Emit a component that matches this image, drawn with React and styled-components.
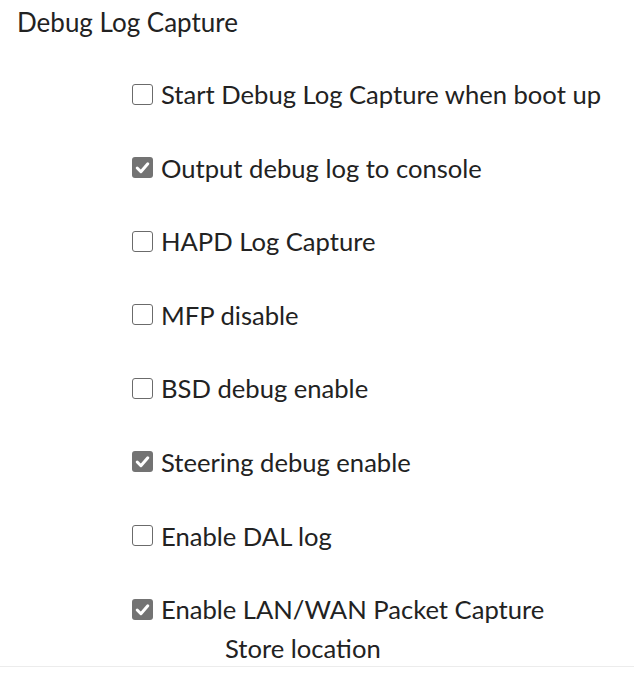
import React from "react";
import styled, { createGlobalStyle } from "styled-components";

const Global = createGlobalStyle`
  html, body { margin: 0; padding: 0; background: #fff; }
  body { font-family: Lato, "Open Sans", sans-serif; color: #222; }
`;

const Page = styled.div`
  width: 634px;
  height: 682px;
  overflow: hidden;
`;

const Section = styled.section`
  border-bottom: 1px solid #ececec;
  height: 667px;
  box-sizing: border-box;
`;

const Title = styled.h2`
  margin: 0;
  padding: 7px 0 0 17px;
  font-size: 26px;
  font-weight: 400;
  line-height: 30px;
  color: #222;
`;

const List = styled.div`
  display: flex;
  flex-direction: column;
  gap: 43.6px;
  padding: 42px 0 0 132px;
`;

const Row = styled.label`
  display: flex;
  align-items: center;
  gap: 8px;
  height: 30px;
  font-size: 25.6px;
  line-height: 30px;
  color: #222;
`;

const Box = styled.span`
  width: 21px;
  height: 21px;
  box-sizing: border-box;
  border-radius: 3px;
  flex: none;
  display: flex;
  align-items: center;
  justify-content: center;
  border: ${(p) => (p.$checked ? "none" : "1.6px solid #6b6b6b")};
  background: ${(p) => (p.$checked ? "#737373" : "#fff")};
`;

const Sub = styled.div`
  padding: 9px 0 0 225px;
  font-size: 25.6px;
  line-height: 30px;
  color: #222;
`;

const Check = () => (
  <svg width="17" height="17" viewBox="0 0 16 16">
    <path d="M3 8.5 L6.5 12 L13 4.5" fill="none" stroke="#fff" strokeWidth="2.8" strokeLinecap="round" strokeLinejoin="round" />
  </svg>
);

const items = [
  ["Start Debug Log Capture when boot up", false],
  ["Output debug log to console", true],
  ["HAPD Log Capture", false],
  ["MFP disable", false],
  ["BSD debug enable", false],
  ["Steering debug enable", true],
  ["Enable DAL log", false],
  ["Enable LAN/WAN Packet Capture", true],
];

export default function App() {
  return (
    <Page>
      <Global />
      <Section>
        <Title>Debug Log Capture</Title>
        <List>
          {items.map(([t, c]) => (
            <Row key={t}>
              <Box $checked={c}>{c && <Check />}</Box>
              {t}
            </Row>
          ))}
        </List>
        <Sub>Store location</Sub>
      </Section>
    </Page>
  );
}
